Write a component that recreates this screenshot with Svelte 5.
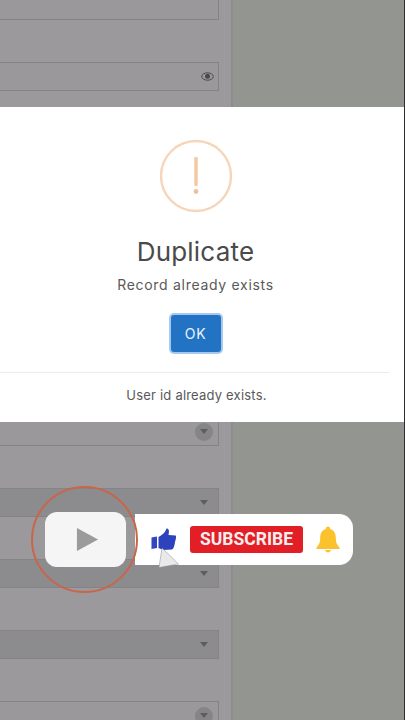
<script>
  // disabled selects have a darker fill and no round button
  const fields = [
    { type: 'text' },
    { type: 'password' },
    { type: 'text' },
    { type: 'text' },
    { type: 'text' },
    { type: 'text' },
    { type: 'select' },
    { type: 'select', disabled: true },
    { type: 'select', disabled: true },
    { type: 'select', disabled: true },
    { type: 'select' }
  ];
</script>

<div class="page">
  <div class="form">
    {#each fields as field}
      <div class="field" class:disabled={field.disabled}>
        {#if field.type === 'password'}
          <svg class="eye" width="13" height="9" viewBox="0 0 13 9">
            <ellipse cx="6.5" cy="4.5" rx="5.8" ry="3.7" fill="none" stroke="#4a4a4c" stroke-width="1" />
            <circle cx="6.5" cy="4.3" r="2.5" fill="#4a4a4c" />
          </svg>
        {:else if field.type === 'select'}
          <span class="caret" class:round={!field.disabled}></span>
        {/if}
      </div>
    {/each}
  </div>

  <div class="dialog">
    <svg class="warn" width="74" height="74" viewBox="0 0 74 74">
      <circle cx="37" cy="37" r="35" fill="none" stroke="#f6d5b8" stroke-width="2.4" />
      <rect x="35.3" y="18" width="3.4" height="29" rx="1.2" fill="#f3c9a2" />
      <circle cx="37" cy="52.5" r="2.4" fill="#ecc19c" />
    </svg>
    <h2>Duplicate</h2>
    <p class="sub">Record already exists</p>
    <button class="ok">OK</button>
    <div class="foot">User id already exists.</div>
  </div>

  <div class="promo">
    <div class="ring"></div>
    <div class="play">
      <svg width="23" height="25" viewBox="0 0 24 26"><path d="M1 1 L23 13 L1 25 Z" fill="#9b9b9b" /></svg>
    </div>
    <div class="pill">
      <div class="thumb">
        <svg width="26" height="26" viewBox="0 0 26 26">
          <path d="M0.5 9.5 L6 8.5 L6 20 L0.5 21 Z" fill="#3146c0" />
          <path d="M7.5 9 C11 7 14 5 15.5 0.5 C18 0.5 18.5 3 17.5 7 L24.5 7.5 C25.5 8 25 11 24 14 C23.5 18 22.5 21 21 21.5 L12 22 L7.5 20 Z" fill="#2c43bd" />
        </svg>
        <svg class="cursor" width="22" height="22" viewBox="0 0 22 22">
          <path d="M4 1 L20.5 17 L1 20.5 Z" fill="#e9e9e9" stroke="#8a8a8a" stroke-width="0.5" />
        </svg>
      </div>
      <span class="subscribe">SUBSCRIBE</span>
      <svg class="bell" width="24" height="27" viewBox="0 0 24 27">
        <path d="M12 0.5 C13.5 0.5 14.2 1.6 14.2 3 C18 4 19.8 7.5 19.8 12 C19.8 16.5 21 19 23.5 21.5 L23.5 23 L0.5 23 L0.5 21.5 C3 19 4.2 16.5 4.2 12 C4.2 7.5 6 4 9.8 3 C9.8 1.6 10.5 0.5 12 0.5 Z" fill="#fcc22e" />
        <path d="M9 24 L15 24 C14.6 25.6 13.4 26.5 12 26.5 C10.6 26.5 9.4 25.6 9 24 Z" fill="#fcc22e" />
      </svg>
    </div>
  </div>
</div>

<style>
  :global(body) { margin: 0; background: #939591; }

  .page {
    position: relative;
    width: 405px;
    height: 720px;
    box-sizing: border-box;
    background: #939591;
    border-right: 1px solid #2e2e2e;
    overflow: hidden;
    font-family: Inter, "Open Sans", sans-serif;
  }

  .form {
    width: 233px;
    height: 740px;
    box-sizing: border-box;
    background: #9b999b;
    border-right: 2px solid #8e8d8e;
    padding-right: 12px;
    display: flex;
    flex-direction: column;
    gap: 42px;
    margin-top: -9px;
  }

  .field {
    flex: none;
    height: 29px;
    box-sizing: border-box;
    border: 1px solid #848284;
    border-left: none;
    background: #9a989a;
    display: flex;
    align-items: center;
    justify-content: flex-end;
    padding-right: 4px;
  }
  .field.disabled { background: #8c8c8f; border-color: #848486; }

  .caret {
    width: 18px;
    height: 18px;
    display: flex;
    align-items: center;
    justify-content: center;
    border-radius: 50%;
    margin-right: 1px;
  }
  .caret::after {
    content: '';
    border-left: 4.5px solid transparent;
    border-right: 4.5px solid transparent;
    border-top: 5px solid #5d5d5f;
  }
  .caret.round { background: #858587; }

  .dialog {
    position: absolute;
    left: 0;
    right: 0;
    top: 107px;
    height: 315px;
    background: #fff;
    display: flex;
    flex-direction: column;
    align-items: center;
    padding-right: 13px;
    box-sizing: border-box;
  }

  .warn { margin-top: 32px; flex: none; }

  h2 {
    margin: 24px 0 0;
    font-size: 26px;
    line-height: 30px;
    font-weight: 400;
    color: #4a4a4a;
    letter-spacing: 0.2px;
  }

  .sub {
    margin: 8px 0 0;
    font-size: 14px;
    line-height: 20px;
    color: #595959;
    letter-spacing: 0.7px;
  }

  .ok {
    margin-top: 20px;
    width: 50px;
    height: 37px;
    box-sizing: border-box;
    border: none;
    border-radius: 3px;
    background: #2273c4;
    box-shadow: 0 0 0 2px #a6c8ec;
    color: #eaf4ff;
    font: 400 14px Inter, sans-serif;
    letter-spacing: 0.6px;
    flex: none;
  }

  .foot {
    align-self: stretch;
    margin-right: -0px;
    margin-top: 20px;
    padding: 14px 0 0 4px;
    width: 389px;
    box-sizing: border-box;
    border-top: 1px solid #ececec;
    text-align: center;
    font-size: 13px;
    line-height: 17px;
    color: #595959;
    letter-spacing: 0.2px;
  }

  .promo {
    position: absolute;
    left: 31px;
    top: 486px;
    width: 322px;
    height: 106px;
    display: flex;
    align-items: center;
  }

  .ring {
    position: absolute;
    left: 0;
    top: 0;
    width: 107px;
    height: 107px;
    box-sizing: border-box;
    border-radius: 50%;
    border: 2.5px solid #c9654a;
    z-index: 3;
  }

  .play {
    position: absolute;
    left: 14px;
    top: 26px;
    width: 81px;
    height: 55px;
    border-radius: 12px;
    background: #f6f5f6;
    display: flex;
    align-items: center;
    justify-content: center;
    padding-left: 3px;
    box-sizing: border-box;
    z-index: 2;
  }

  .pill {
    position: absolute;
    left: 104px;
    top: 28px;
    right: 0;
    height: 51px;
    background: #fff;
    border-radius: 0 14px 14px 0;
    display: flex;
    align-items: center;
    padding-left: 16px;
    box-sizing: border-box;
  }

  .thumb { position: relative; width: 26px; height: 26px; margin-top: 2px; flex: none; }
  .cursor { position: absolute; left: 7px; top: 19px; }

  .subscribe {
    margin-left: 13px;
    width: 113px;
    height: 27px;
    flex: none;
    border-radius: 3px;
    background: #e21e26;
    color: #f8eeee;
    font: 700 17.5px/27px Roboto, sans-serif;
    text-align: center;
  }

  .bell { margin-left: 13px; flex: none; }
</style>
